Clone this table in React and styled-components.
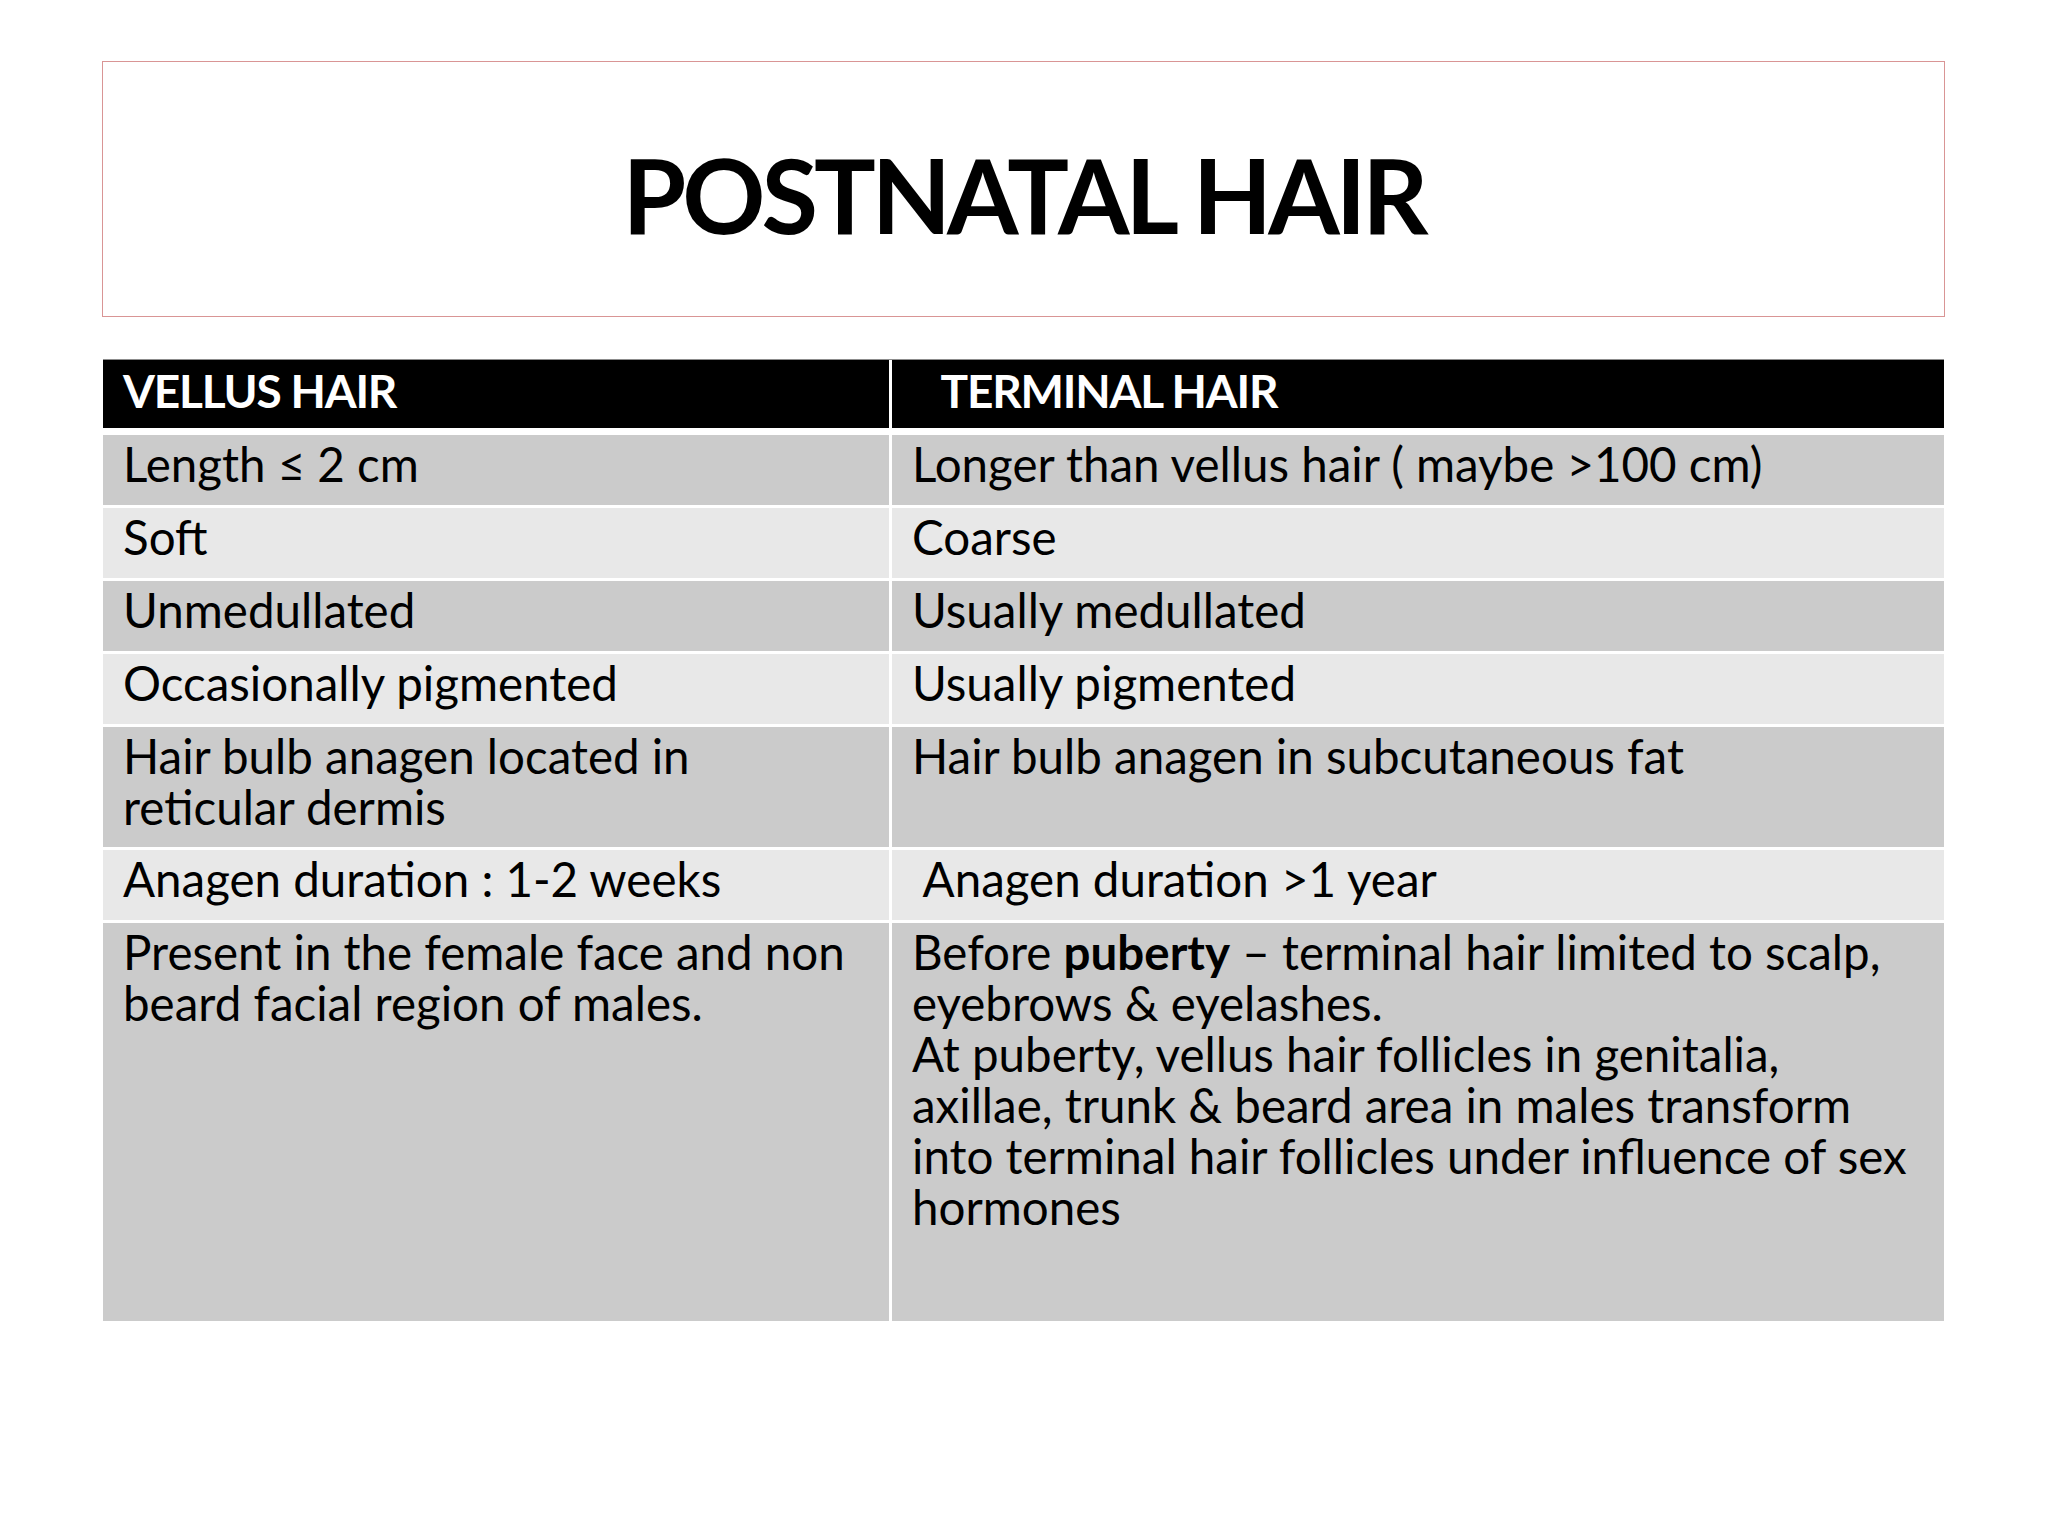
import styled, { createGlobalStyle } from "styled-components";

const GlobalStyle = createGlobalStyle`
  html, body {
    margin: 0;
    padding: 0;
    background: #fff;
  }
  body {
    font-family: Lato, "Open Sans", "Liberation Sans", sans-serif;
    color: #000;
  }
`;

const Slide = styled.main`
  width: 2048px;
  height: 1536px;
  box-sizing: border-box;
  padding: 61px 103px 0 102px;
  background: #fff;
  overflow: hidden;
`;

const TitleBox = styled.header`
  height: 256px;
  box-sizing: border-box;
  border: 1.5px solid #d99595;
  padding-top: 81px;
  text-align: center;
`;

const Title = styled.h1`
  margin: 0;
  font-size: 103px;
  line-height: 103px;
  font-weight: 700;
  letter-spacing: -4px;
  white-space: nowrap;
`;

const Table = styled.section`
  margin: 42px 0 0 1px;
  width: 1841px;
  display: flex;
  flex-direction: column;
  gap: 3px;
`;

const Row = styled.div`
  display: grid;
  grid-template-columns: 786px 1fr;
  column-gap: 3px;
  height: ${(p) => p.$height}px;
  margin-bottom: ${(p) => (p.$head ? 4 : 0)}px;
  border-top: ${(p) => (p.$head ? "1px solid #8c8c8c" : "none")};
`;

const tones = {
  head: "#000",
  dark: "#cbcbcb",
  light: "#e8e8e8",
};

const Cell = styled.div`
  background: ${(p) => tones[p.$tone]};
  color: ${(p) => (p.$tone === "head" ? "#fff" : "#000")};
  font-weight: ${(p) => (p.$tone === "head" ? 700 : 400)};
  font-size: ${(p) => (p.$tone === "head" ? 46 : 47.5)}px;
  line-height: 51px;
  letter-spacing: ${(p) => (p.$tone === "head" ? -1.2 : 0)}px;
  padding: ${(p) => (p.$tone === "head" ? "5px" : "3px")} 0 0 20px;
  white-space: pre;
  overflow: hidden;

  b {
    font-weight: 700;
  }
`;

const rows = [
  { tone: "dark", h: 70, a: "Length \u2264 2 cm", b: "Longer than vellus hair ( maybe >100 cm)" },
  { tone: "light", h: 70, a: "Soft", b: "Coarse" },
  { tone: "dark", h: 70, a: "Unmedullated", b: "Usually medullated" },
  { tone: "light", h: 70, a: "Occasionally pigmented", b: "Usually pigmented" },
  {
    tone: "dark",
    h: 120,
    a: "Hair bulb anagen located in\nreticular dermis",
    b: "Hair bulb anagen in subcutaneous fat",
  },
  { tone: "light", h: 70, a: "Anagen duration : 1-2 weeks", b: " Anagen duration >1 year" },
];

export default function App() {
  return (
    <>
      <GlobalStyle />
      <Slide>
        <TitleBox>
          <Title>POSTNATAL HAIR</Title>
        </TitleBox>
        <Table>
          <Row $head $height={68}>
            <Cell $tone="head">VELLUS HAIR</Cell>
            <Cell $tone="head">{"   TERMINAL HAIR"}</Cell>
          </Row>
          {rows.map((r, i) => (
            <Row key={i} $height={r.h}>
              <Cell $tone={r.tone}>{r.a}</Cell>
              <Cell $tone={r.tone}>{r.b}</Cell>
            </Row>
          ))}
          <Row $height={398}>
            <Cell $tone="dark">
              {"Present in the female face and non\nbeard facial region of males."}
            </Cell>
            <Cell $tone="dark">
              {"Before "}
              <b>puberty</b>
              {
                " \u2013 terminal hair limited to scalp,\neyebrows & eyelashes.\nAt puberty, vellus hair follicles in genitalia,\naxillae, trunk & beard area in males transform\ninto terminal hair follicles under influence of sex\nhormones"
              }
            </Cell>
          </Row>
        </Table>
      </Slide>
    </>
  );
}
